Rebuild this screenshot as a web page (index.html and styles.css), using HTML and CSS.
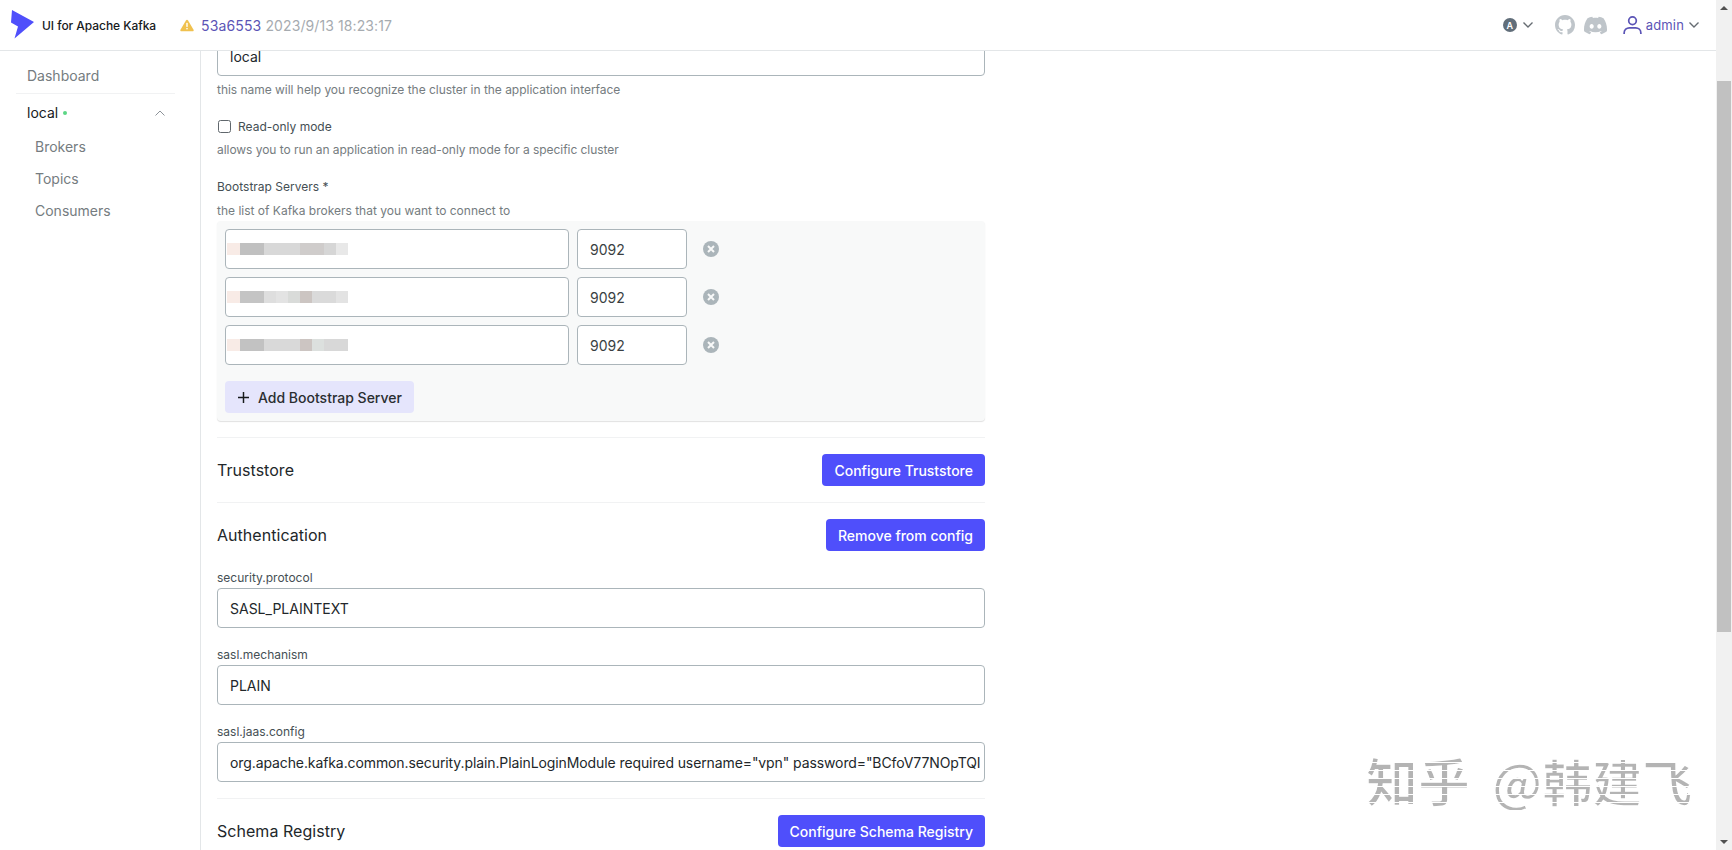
FILE: index.html
```html
<!DOCTYPE html>
<html lang="en">
<head>
<meta charset="utf-8">
<title>UI for Apache Kafka</title>
<link rel="stylesheet" href="styles.css">
</head>
<body>
<div class="page">
  <div class="viewport">
    <header class="navbar">
      <div class="brand">
        <svg class="logo" viewBox="0 0 24 30"><path d="M1 0L23 12L3.5 28.5L7 16.5L0 12.5Z"/></svg>
        <span class="brand-name">UI for Apache Kafka</span>
      </div>
      <div class="version">
        <svg class="warn" viewBox="0 0 16 14"><path d="M8 .5c.5 0 .9.3 1.2.8l6.3 10.6c.5.9-.1 1.8-1.1 1.8H1.6c-1 0-1.6-.9-1.1-1.8L6.8 1.3C7.1.8 7.5.5 8 .5z"/><rect class="warn-mark" x="7.2" y="4" width="1.6" height="4.6"/><rect class="warn-mark" x="7.2" y="9.8" width="1.6" height="1.6"/></svg>
        <span class="hash">53a6553</span>
        <span class="date">2023/9/13 18:23:17</span>
      </div>
      <div class="nav-right">
        <div class="lang"><span class="lang-badge">A</span><svg class="chev" viewBox="0 0 10 6"><path d="M.5.5L5 5L9.5.5"/></svg></div>
        <svg class="github" viewBox="0 0 16 16"><path d="M8 0C3.58 0 0 3.58 0 8c0 3.54 2.29 6.53 5.47 7.59.4.07.55-.17.55-.38 0-.19-.01-.82-.01-1.49-2.01.37-2.53-.49-2.69-.94-.09-.23-.48-.94-.82-1.13-.28-.15-.68-.52-.01-.53.63-.01 1.08.58 1.23.82.72 1.21 1.87.87 2.33.66.07-.52.28-.87.51-1.07-1.78-.2-3.64-.89-3.64-3.95 0-.87.31-1.59.82-2.15-.08-.2-.36-1.02.08-2.12 0 0 .67-.21 2.2.82.64-.18 1.32-.27 2-.27.68 0 1.36.09 2 .27 1.53-1.04 2.2-.82 2.2-.82.44 1.1.16 1.92.08 2.12.51.56.82 1.27.82 2.15 0 3.07-1.87 3.75-3.65 3.95.29.25.54.73.54 1.48 0 1.07-.01 1.93-.01 2.2 0 .21.15.46.55.38A8.013 8.013 0 0016 8c0-4.42-3.58-8-8-8z"/></svg>
        <svg class="discord" viewBox="0 0 24 24"><path d="M20.317 4.3698a19.7913 19.7913 0 00-4.8851-1.5152.0741.0741 0 00-.0785.0371c-.211.3753-.4447.8648-.6083 1.2495-1.8447-.2762-3.68-.2762-5.4868 0-.1636-.3933-.4058-.8742-.6177-1.2495a.077.077 0 00-.0785-.037 19.7363 19.7363 0 00-4.8852 1.515.0699.0699 0 00-.0321.0277C.5334 9.0458-.319 13.5799.0992 18.0578a.0824.0824 0 00.0312.0561c2.0528 1.5076 4.0413 2.4228 5.9929 3.0294a.0777.0777 0 00.0842-.0276c.4616-.6304.8731-1.2952 1.226-1.9942a.076.076 0 00-.0416-.1057c-.6528-.2476-1.2743-.5495-1.8722-.8923a.077.077 0 01-.0076-.1277c.1258-.0943.2517-.1923.3718-.2914a.0743.0743 0 01.0776-.0105c3.9278 1.7933 8.18 1.7933 12.0614 0a.0739.0739 0 01.0785.0095c.1202.099.246.1981.3728.2924a.077.077 0 01-.0066.1276 12.2986 12.2986 0 01-1.873.8914.0766.0766 0 00-.0407.1067c.3604.698.7719 1.3628 1.225 1.9932a.076.076 0 00.0842.0286c1.961-.6067 3.9495-1.5219 6.0023-3.0294a.077.077 0 00.0313-.0552c.5004-5.177-.8382-9.6739-3.5485-13.6604a.061.061 0 00-.0312-.0286zM8.02 15.3312c-1.1825 0-2.1569-1.0857-2.1569-2.419 0-1.3332.9555-2.4189 2.157-2.4189 1.2108 0 2.1757 1.0952 2.1568 2.419 0 1.3332-.9555 2.4189-2.1569 2.4189zm7.9748 0c-1.1825 0-2.1569-1.0857-2.1569-2.419 0-1.3332.9554-2.4189 2.1569-2.4189 1.2108 0 2.1757 1.0952 2.1568 2.419 0 1.3332-.946 2.4189-2.1568 2.4189Z"/></svg>
        <div class="user">
          <svg class="user-icon" viewBox="0 0 20 20"><circle cx="10" cy="5.5" r="4"/><path d="M1.2 19.5v-1.2c0-3.4 2.6-5.3 5.5-5.3h6.6c2.9 0 5.5 1.9 5.5 5.3v1.2"/></svg>
          <span class="user-name">admin</span>
          <svg class="chev" viewBox="0 0 10 6"><path d="M.5.5L5 5L9.5.5"/></svg>
        </div>
      </div>
    </header>
    <div class="body">
      <nav class="sidebar">
        <a class="side-item dash">Dashboard</a>
        <div class="side-cluster">
          <span class="cluster-name">local</span><span class="dot"></span>
          <svg class="chev-up" viewBox="0 0 10 6"><path d="M.5 5.5L5 1L9.5 5.5"/></svg>
        </div>
        <a class="side-item sub">Brokers</a>
        <a class="side-item sub">Topics</a>
        <a class="side-item sub">Consumers</a>
      </nav>
      <main class="main">
        <form class="form">
          <input class="input" type="text" value="local">
          <p class="hint first-hint">this name will help you recognize the cluster in the application interface</p>
          <label class="check"><input class="checkbox" type="checkbox"><span>Read-only mode</span></label>
          <p class="hint check-hint">allows you to run an application in read-only mode for a specific cluster</p>
          <div class="label boot-label">Bootstrap Servers *</div>
          <p class="hint boot-hint">the list of Kafka brokers that you want to connect to</p>
          <div class="servers">
            <div class="server">
              <div class="host"><input class="input" type="text"><span class="blur b1"></span></div>
              <input class="input port" type="text" value="9092">
              <svg class="remove" viewBox="0 0 16 16"><circle cx="8" cy="8" r="8"/><path d="M5 5L11 11M11 5L5 11"/></svg>
            </div>
            <div class="server">
              <div class="host"><input class="input" type="text"><span class="blur b2"></span></div>
              <input class="input port" type="text" value="9092">
              <svg class="remove" viewBox="0 0 16 16"><circle cx="8" cy="8" r="8"/><path d="M5 5L11 11M11 5L5 11"/></svg>
            </div>
            <div class="server">
              <div class="host"><input class="input" type="text"><span class="blur b3"></span></div>
              <input class="input port" type="text" value="9092">
              <svg class="remove" viewBox="0 0 16 16"><circle cx="8" cy="8" r="8"/><path d="M5 5L11 11M11 5L5 11"/></svg>
            </div>
            <button class="add" type="button"><svg class="plus" viewBox="0 0 12 12"><path d="M6 0V12M0 6H12"/></svg>Add Bootstrap Server</button>
          </div>
          <section class="section">
            <h3 class="section-title">Truststore</h3>
            <button class="btn" type="button">Configure Truststore</button>
          </section>
          <section class="section auth">
            <h3 class="section-title">Authentication</h3>
            <button class="btn" type="button">Remove from config</button>
          </section>
          <div class="field"><div class="label">security.protocol</div><input class="input" type="text" value="SASL_PLAINTEXT"></div>
          <div class="field"><div class="label">sasl.mechanism</div><input class="input" type="text" value="PLAIN"></div>
          <div class="field"><div class="label">sasl.jaas.config</div><input class="input jaas" type="text" value='org.apache.kafka.common.security.plain.PlainLoginModule required username="vpn" password="BCfoV77NOpTQI'></div>
          <section class="section last">
            <h3 class="section-title">Schema Registry</h3>
            <button class="btn" type="button">Configure Schema Registry</button>
          </section>
        </form>
      </main>
    </div>
    <div class="watermark">知乎<span class="wm-handle">@韩建飞</span></div>
  </div>
  <div class="scrollbar">
    <div class="arrow up"></div>
    <div class="track"><div class="thumb"></div></div>
    <div class="arrow down"></div>
  </div>
</div>
</body>
</html>
```
FILE: styles.css
```css
* { box-sizing: border-box; }
html, body { margin: 0; height: 100%; overflow: hidden; }
body { font-family: Inter, "Noto Sans CJK SC", sans-serif; background: #fff; color: #171a1c; }

.page { display: flex; width: 1732px; height: 850px; }
.viewport { position: relative; flex: 1; min-width: 0; display: flex; flex-direction: column; }

/* top bar */
.navbar { height: 51px; flex: none; display: flex; align-items: center; border-bottom: 1px solid #e3e6e8; background: #fff; }
.brand { display: flex; align-items: center; width: 176px; padding-left: 11px; }
.logo { width: 24px; height: 30px; fill: #4f4ffb; flex: none; }
.brand-name { margin-left: 7px; font-size: 12px; font-weight: 500; color: #171a1c; white-space: nowrap; letter-spacing: -.05px; }
.version { display: flex; align-items: center; margin-left: 4px; font-size: 14px; }
.warn { width: 14px; height: 13px; margin-right: 7px; fill: #f0c14f; }
.warn-mark { fill: #fff; }
.hash { color: #5b54b6; letter-spacing: .15px; }
.date { margin-left: 4px; color: #a6abb0; letter-spacing: .1px; }
.nav-right { margin-left: auto; display: flex; align-items: center; padding-right: 17px; }
.lang { display: flex; align-items: center; }
.lang-badge { width: 14px; height: 14px; border-radius: 50%; background: #616e7a; color: #fff; font-size: 9px; font-weight: 600; display: flex; align-items: center; justify-content: center; }
.chev { width: 10px; height: 6px; margin-left: 6px; fill: none; stroke: #666c72; stroke-width: 1.4; }
.github { width: 20px; height: 20px; margin-left: 22px; fill: #bfc5ca; }
.discord { width: 23px; height: 23px; margin-left: 9px; fill: #bfc5ca; }
.user { display: flex; align-items: center; margin-left: 16px; }
.user-icon { width: 19px; height: 20px; fill: none; stroke: #5b54b6; stroke-width: 1.8; }
.user-name { margin-left: 4px; font-size: 13px; color: #5b54b6; letter-spacing: .15px; }
.user .chev { margin-left: 5px; }

/* columns */
.body { flex: 1; min-height: 0; display: flex; }
.sidebar { width: 201px; flex: none; border-right: 1px solid #e3e6e8; padding: 8px 32px 0 16px; }
.side-item { display: block; font-size: 14px; color: #757c80; }
.dash { padding: 0 11px; height: 35px; line-height: 34px; border-bottom: 1px solid #f1f2f3; margin-right: -7px; }
.side-cluster { display: flex; align-items: center; height: 37px; padding: 0 3px 0 11px; font-size: 14px; color: #171a1c; }
.dot { width: 4px; height: 4px; border-radius: 50%; background: #5cd685; margin-left: 5px; }
.chev-up { width: 10px; height: 6px; margin-left: auto; fill: none; stroke: #8d9399; stroke-width: 1; }
.sub { height: 32px; line-height: 32px; padding-left: 19px; }

/* form */
.main { flex: 1; min-width: 0; overflow: hidden; padding-left: 16px; }
.form { width: 768px; margin-top: -15px; }
.input { display: block; width: 100%; height: 40px; padding: 0 12px; border: 1px solid #abb5ba; border-radius: 4px; background: #fff; font: 14px Inter, sans-serif; color: #22272a; outline: none; }
.port { color: #3a3f42; }
.jaas { padding-right: 0; letter-spacing: -.1px; }
.hint { margin: 0; font-size: 12px; line-height: 16px; color: #757c80; }
.first-hint { margin-top: 6px; letter-spacing: -.03px; }
.check { display: flex; align-items: center; margin-top: 21px; font-size: 12px; line-height: 16px; color: #454f54; }
.checkbox { appearance: none; width: 13px; height: 13px; margin: -2px 7px 0 1px; border: 1px solid #60676c; border-radius: 2.5px; background: #fff; flex: none; }
.check-hint { margin-top: 7px; letter-spacing: -.05px; }
.label { font-size: 12px; line-height: 16px; color: #454f54; }
.boot-label { margin-top: 21px; }
.boot-hint { margin-top: 8px; }
.servers { margin-top: 2px; padding: 8px; background: #f8f9f9; border-radius: 4px; box-shadow: 0 1px 1px rgba(0,0,0,.12); }
.server { display: flex; align-items: center; margin-bottom: 8px; }
.host { position: relative; width: 344px; flex: none; }
.port { width: 110px; margin-left: 8px; flex: none; }
.remove { width: 16px; height: 16px; margin-left: 16px; }
.remove circle { fill: #abb5ba; }
.remove path { stroke: #f8f9f9; stroke-width: 2; fill: none; }
.blur { position: absolute; left: 2px; top: 14px; width: 121px; height: 12px; }
.b1 { background: linear-gradient(90deg, #f8ebe6 0 13px, #c0c0c0 13px 37px, #d8d8d8 37px 73px, #cfcccb 73px 97px, #d6d6d6 97px 109px, #e8e8e8 109px 121px); }
.b2 { background: linear-gradient(90deg, #f8ebe6 0 13px, #c4c4c4 13px 37px, #dedede 37px 49px, #e3e3e3 49px 61px, #d9dbd9 61px 73px, #ccc5c2 73px 85px, #dadada 85px 109px, #e3e3e3 109px 121px); }
.b3 { background: linear-gradient(90deg, #f8ebe6 0 13px, #c2c2c2 13px 37px, #d9d9d9 37px 73px, #ccc5c2 73px 85px, #dce0de 85px 97px, #d8d8d8 97px 121px); }
.add { display: flex; align-items: center; height: 32px; width: 189px; margin-top: 16px; padding: 0 0 0 13px; border: 0; border-radius: 4px; background: #e5e5fc; font: 500 14px Inter, sans-serif; color: #2a2e31; }
.plus { width: 11px; height: 11px; margin-right: 9px; stroke: #171a1c; stroke-width: 1.6; fill: none; }
.section { display: flex; align-items: center; justify-content: space-between; height: 65px; margin-top: 16px; border-top: 1px solid #f1f2f3; }
.auth { margin-top: 0; }
.section-title { margin: 0; font-size: 16px; font-weight: 400; color: #22272a; letter-spacing: .04px; }
.btn { height: 32px; padding: 0 12px; border: 0; border-radius: 4px; background: #4f4ffb; color: #fff; font: 500 14px Inter, sans-serif; }
.field { margin-top: 19px; }
.field .label { margin-bottom: 2px; }
.auth + .field { margin-top: 3px; }

/* watermark */
.watermark { position: absolute; left: 1366px; top: 750px; display: flex; font-family: "Noto Sans CJK SC", sans-serif; font-size: 52px; font-weight: 700; line-height: 60px; color: #b4b4b4; white-space: nowrap; -webkit-text-stroke: 1.6px #fff; -webkit-mask-image: repeating-linear-gradient(0deg, #000 0 7px, transparent 7px 8px); mask-image: repeating-linear-gradient(0deg, #000 0 7px, transparent 7px 8px); }
.wm-handle { margin-left: 22px; font-size: 50px; }

/* scrollbar */
.scrollbar { width: 16px; flex: none; display: flex; flex-direction: column; background: #f1f1f1; }
.arrow { height: 17px; flex: none; position: relative; }
.arrow::after { content: ""; position: absolute; left: 4px; border-left: 4px solid transparent; border-right: 4px solid transparent; }
.arrow.up::after { top: 6px; border-bottom: 4px solid #505050; }
.arrow.down::after { bottom: 6px; border-top: 4px solid #505050; }
.track { flex: 1; padding-top: 64px; }
.thumb { height: 551px; margin: 0 1px; background: #c1c1c1; }
```
